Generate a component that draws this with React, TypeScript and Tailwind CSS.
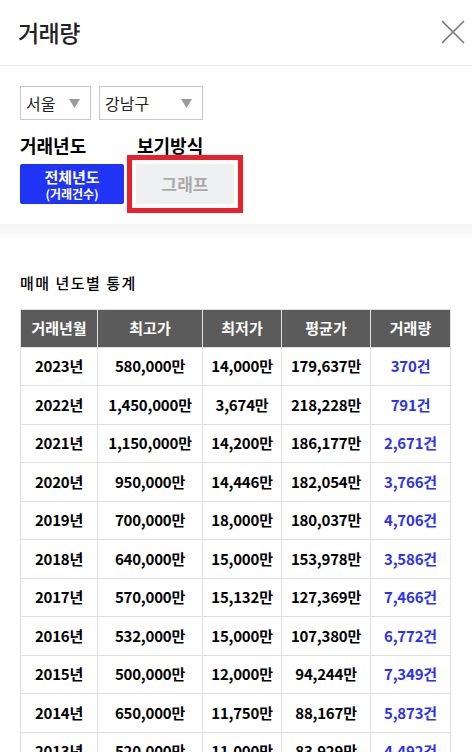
import React from "react";

const rows = [
  ["2023년", "580,000만", "14,000만", "179,637만", "370건"],
  ["2022년", "1,450,000만", "3,674만", "218,228만", "791건"],
  ["2021년", "1,150,000만", "14,200만", "186,177만", "2,671건"],
  ["2020년", "950,000만", "14,446만", "182,054만", "3,766건"],
  ["2019년", "700,000만", "18,000만", "180,037만", "4,706건"],
  ["2018년", "640,000만", "15,000만", "153,978만", "3,586건"],
  ["2017년", "570,000만", "15,132만", "127,369만", "7,466건"],
  ["2016년", "532,000만", "15,000만", "107,380만", "6,772건"],
  ["2015년", "500,000만", "12,000만", "94,244만", "7,349건"],
  ["2014년", "650,000만", "11,750만", "88,167만", "5,873건"],
  ["2013년", "520,000만", "11,000만", "83,929만", "4,492건"],
];

const font = { fontFamily: "'Noto Sans CJK KR', 'Noto Sans', sans-serif" };

function Select({ label, width }: { label: string; width: string }) {
  return (
    <div
      className={`${width} h-[34px] border border-[#c8c8c8] bg-white flex items-center justify-between pl-[5px] pr-[10px]`}
    >
      <span className="text-[16px] text-[#222] leading-none">{label}</span>
      <svg width="11" height="9" viewBox="0 0 11 9">
        <path d="M0 0 L11 0 L5.5 9 Z" fill="#9a9a9a" />
      </svg>
    </div>
  );
}

export default function App() {
  return (
    <div className="w-[472px] h-[752px] overflow-hidden bg-white" style={font}>
      {/* header */}
      <div className="h-[66px] border-b border-[#ececec] flex items-center justify-between pl-[18px] pr-[6px]">
        <h1 className="text-[23px] font-medium text-[#222] tracking-tight">거래량</h1>
        <svg width="24" height="24" viewBox="0 0 24 24" className="mr-[1px] mb-[2px]">
          <path d="M1 1 L23 23 M23 1 L1 23" stroke="#777" strokeWidth="1.6" />
        </svg>
      </div>

      {/* filters */}
      <div className="px-5 pt-[20px] pb-[11px]">
        <div className="flex gap-2">
          <Select label="서울" width="w-[71px]" />
          <Select label="강남구" width="w-[104px]" />
        </div>
        <div className="flex mt-[14px]">
          <div className="w-[117px]">
            <div className="text-[18px] font-bold text-black leading-[22px]">거래년도</div>
            <button className="mt-[8px] w-[104px] h-[40px] rounded-[2px] bg-[#2034f5] text-white flex flex-col items-center justify-center">
              <span className="block text-[15px] font-bold leading-[18px]">전체년도</span>
              <span className="block text-[12px] font-bold leading-[15px]">(거래건수)</span>
            </button>
          </div>
          <div>
            <div className="text-[18px] font-bold text-black leading-[22px]">보기방식</div>
            <div className="-ml-[10px] -mt-[1px] w-[116px] h-[58px] border-[5px] border-[#e8212b] flex items-center justify-center">
              <button className="w-[98px] h-[40px] rounded-[2px] bg-[#eef0f2] text-[#aaaaaa] text-[17px] font-bold">
                그래프
              </button>
            </div>
          </div>
        </div>
      </div>

      {/* separator */}
      <div className="h-[14px] bg-gradient-to-b from-[#f4f4f4] to-[#fbfbfb]" />

      {/* stats */}
      <div className="px-5 pt-[34px]">
        <h2 className="text-[15px] font-medium text-black tracking-[1.5px]">매매 년도별 통계</h2>
        <table className="mt-[14px] w-[430px] border-collapse table-fixed">
          <colgroup>
            <col className="w-[77px]" />
            <col className="w-[105px]" />
            <col className="w-[79px]" />
            <col className="w-[89px]" />
            <col className="w-[80px]" />
          </colgroup>
          <thead>
            <tr className="h-[38px] bg-[#5b5b5b]">
              {["거래년월", "최고가", "최저가", "평균가", "거래량"].map((h) => (
                <th
                  key={h}
                  className="border border-[#e0e0e0] text-white text-[15px] font-bold text-center p-0"
                >
                  {h}
                </th>
              ))}
            </tr>
          </thead>
          <tbody>
            {rows.map((r) => (
              <tr key={r[0]} className="h-[38.5px]">
                {r.map((c, i) => (
                  <td
                    key={i}
                    className={`border border-[#e0e0e0] text-center text-[15px] font-semibold p-0 tracking-[-0.2px] ${
                      i === 4 ? "text-[#2b32f0]" : "text-black"
                    }`}
                  >
                    {c}
                  </td>
                ))}
              </tr>
            ))}
          </tbody>
        </table>
      </div>
    </div>
  );
}
